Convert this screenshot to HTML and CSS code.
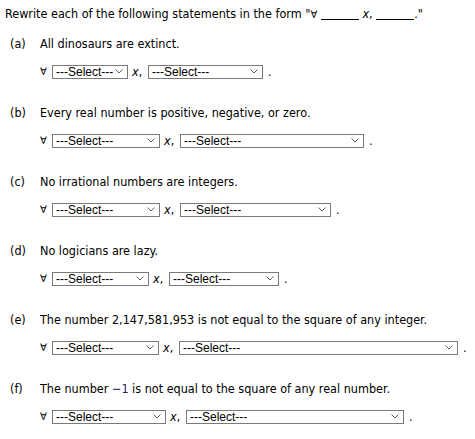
FILE: index.html
```html
<!DOCTYPE html>
<html lang="en">
<head>
<meta charset="utf-8">
<title>Rewrite statements</title>
<link rel="stylesheet" href="styles.css">
</head>
<body>
<div class="page">
  <p class="intro">Rewrite each of the following statements in the form "<span class="fa-inline">∀</span> <span class="blank"></span> <i>x</i>, <span class="blank"></span>."</p>
  <ol class="items">
    <li class="item">
      <div class="stmt"><span class="lbl">(a)</span><span>All dinosaurs are extinct.</span></div>
      <div class="ans">
        <span class="fa">∀</span>
        <span class="sel"><select class="w76"><option>---Select---</option></select><svg class="chev" width="8" height="5" viewBox="0 0 8 5"><path d="M0.5 0.5 L4 4 L7.5 0.5" fill="none" stroke="#606060" stroke-width="1"/></svg></span>
        <span class="var"><i>x</i>,</span>
        <span class="sel"><select class="w115"><option>---Select---</option></select><svg class="chev" width="8" height="5" viewBox="0 0 8 5"><path d="M0.5 0.5 L4 4 L7.5 0.5" fill="none" stroke="#606060" stroke-width="1"/></svg></span>
        <span class="dot">.</span>
      </div>
    </li>
    <li class="item">
      <div class="stmt"><span class="lbl">(b)</span><span>Every real number is positive, negative, or zero.</span></div>
      <div class="ans">
        <span class="fa">∀</span>
        <span class="sel"><select class="w108"><option>---Select---</option></select><svg class="chev" width="8" height="5" viewBox="0 0 8 5"><path d="M0.5 0.5 L4 4 L7.5 0.5" fill="none" stroke="#606060" stroke-width="1"/></svg></span>
        <span class="var"><i>x</i>,</span>
        <span class="sel"><select class="w184"><option>---Select---</option></select><svg class="chev" width="8" height="5" viewBox="0 0 8 5"><path d="M0.5 0.5 L4 4 L7.5 0.5" fill="none" stroke="#606060" stroke-width="1"/></svg></span>
        <span class="dot">.</span>
      </div>
    </li>
    <li class="item">
      <div class="stmt"><span class="lbl">(c)</span><span>No irrational numbers are integers.</span></div>
      <div class="ans">
        <span class="fa">∀</span>
        <span class="sel"><select class="w108"><option>---Select---</option></select><svg class="chev" width="8" height="5" viewBox="0 0 8 5"><path d="M0.5 0.5 L4 4 L7.5 0.5" fill="none" stroke="#606060" stroke-width="1"/></svg></span>
        <span class="var"><i>x</i>,</span>
        <span class="sel"><select class="w151"><option>---Select---</option></select><svg class="chev" width="8" height="5" viewBox="0 0 8 5"><path d="M0.5 0.5 L4 4 L7.5 0.5" fill="none" stroke="#606060" stroke-width="1"/></svg></span>
        <span class="dot">.</span>
      </div>
    </li>
    <li class="item">
      <div class="stmt"><span class="lbl">(d)</span><span>No logicians are lazy.</span></div>
      <div class="ans">
        <span class="fa">∀</span>
        <span class="sel"><select class="w97"><option>---Select---</option></select><svg class="chev" width="8" height="5" viewBox="0 0 8 5"><path d="M0.5 0.5 L4 4 L7.5 0.5" fill="none" stroke="#606060" stroke-width="1"/></svg></span>
        <span class="var"><i>x</i>,</span>
        <span class="sel"><select class="w110"><option>---Select---</option></select><svg class="chev" width="8" height="5" viewBox="0 0 8 5"><path d="M0.5 0.5 L4 4 L7.5 0.5" fill="none" stroke="#606060" stroke-width="1"/></svg></span>
        <span class="dot">.</span>
      </div>
    </li>
    <li class="item">
      <div class="stmt"><span class="lbl">(e)</span><span>The number 2,147,581,953 is not equal to the square of any integer.</span></div>
      <div class="ans">
        <span class="fa">∀</span>
        <span class="sel"><select class="w107"><option>---Select---</option></select><svg class="chev" width="8" height="5" viewBox="0 0 8 5"><path d="M0.5 0.5 L4 4 L7.5 0.5" fill="none" stroke="#606060" stroke-width="1"/></svg></span>
        <span class="var"><i>x</i>,</span>
        <span class="sel"><select class="w279"><option>---Select---</option></select><svg class="chev" width="8" height="5" viewBox="0 0 8 5"><path d="M0.5 0.5 L4 4 L7.5 0.5" fill="none" stroke="#606060" stroke-width="1"/></svg></span>
        <span class="dot">.</span>
      </div>
    </li>
    <li class="item">
      <div class="stmt"><span class="lbl">(f)</span><span>The number <span class="num">−1</span> is not equal to the square of any real number.</span></div>
      <div class="ans">
        <span class="fa">∀</span>
        <span class="sel"><select class="w114"><option>---Select---</option></select><svg class="chev" width="8" height="5" viewBox="0 0 8 5"><path d="M0.5 0.5 L4 4 L7.5 0.5" fill="none" stroke="#606060" stroke-width="1"/></svg></span>
        <span class="var"><i>x</i>,</span>
        <span class="sel"><select class="w218"><option>---Select---</option></select><svg class="chev" width="8" height="5" viewBox="0 0 8 5"><path d="M0.5 0.5 L4 4 L7.5 0.5" fill="none" stroke="#606060" stroke-width="1"/></svg></span>
        <span class="dot">.</span>
      </div>
    </li>
  </ol>
</div>
</body>
</html>
```
FILE: styles.css
```css
body {
  margin: 0;
  background: #fff;
  color: #000;
  font-family: "DejaVu Sans Condensed", "DejaVu Sans", sans-serif;
  font-stretch: condensed;
  font-size: 12.5px;
}

.page {
  padding: 6px 5px;
}

.intro {
  margin: 0;
  line-height: 16px;
  white-space: nowrap;
}

.fa-inline {
  font-family: "DejaVu Sans", sans-serif;
  font-stretch: normal;
  font-size: 10px;
}

.blank {
  display: inline-block;
  width: 38px;
  height: 1px;
  border-bottom: 1px solid #000;
  margin-bottom: -2px;
}

.items {
  list-style: none;
  margin: 13px 0 0;
  padding: 0 0 0 5px;
  display: flex;
  flex-direction: column;
  gap: 26px;
}

.item {
  display: flex;
  flex-direction: column;
  gap: 13px;
}

.stmt {
  display: flex;
  line-height: 16px;
  white-space: nowrap;
}

.lbl {
  width: 30px;
  flex: none;
}

.num {
  color: #2c1d5c;
}

.ans {
  display: flex;
  align-items: center;
  height: 14px;
  padding-left: 30px;
  line-height: 14px;
}

.fa {
  font-family: "DejaVu Sans", sans-serif;
  font-stretch: normal;
  font-size: 10px;
  width: 12px;
  flex: none;
}

.sel {
  position: relative;
  display: block;
  height: 14px;
  flex: none;
}

.sel select {
  -webkit-appearance: none;
  appearance: none;
  display: block;
  box-sizing: border-box;
  height: 14px;
  margin: 0;
  padding: 0 0 0 3px;
  border: 1px solid #7a7a7a;
  border-radius: 0;
  background: #fff;
  color: #000;
  font-family: "Liberation Sans", Arial, sans-serif;
  font-size: 12px;
  line-height: 12px;
}

.chev {
  position: absolute;
  right: 5px;
  top: 4px;
  pointer-events: none;
}

.var {
  width: 20px;
  padding-left: 4px;
  box-sizing: border-box;
  flex: none;
}

.dot {
  margin-left: 5px;
}

.w76 { width: 76px; }
.w97 { width: 97px; }
.w107 { width: 107px; }
.w108 { width: 108px; }
.w110 { width: 110px; }
.w114 { width: 114px; }
.w115 { width: 115px; }
.w151 { width: 151px; }
.w184 { width: 184px; }
.w218 { width: 218px; }
.w279 { width: 279px; }
```
